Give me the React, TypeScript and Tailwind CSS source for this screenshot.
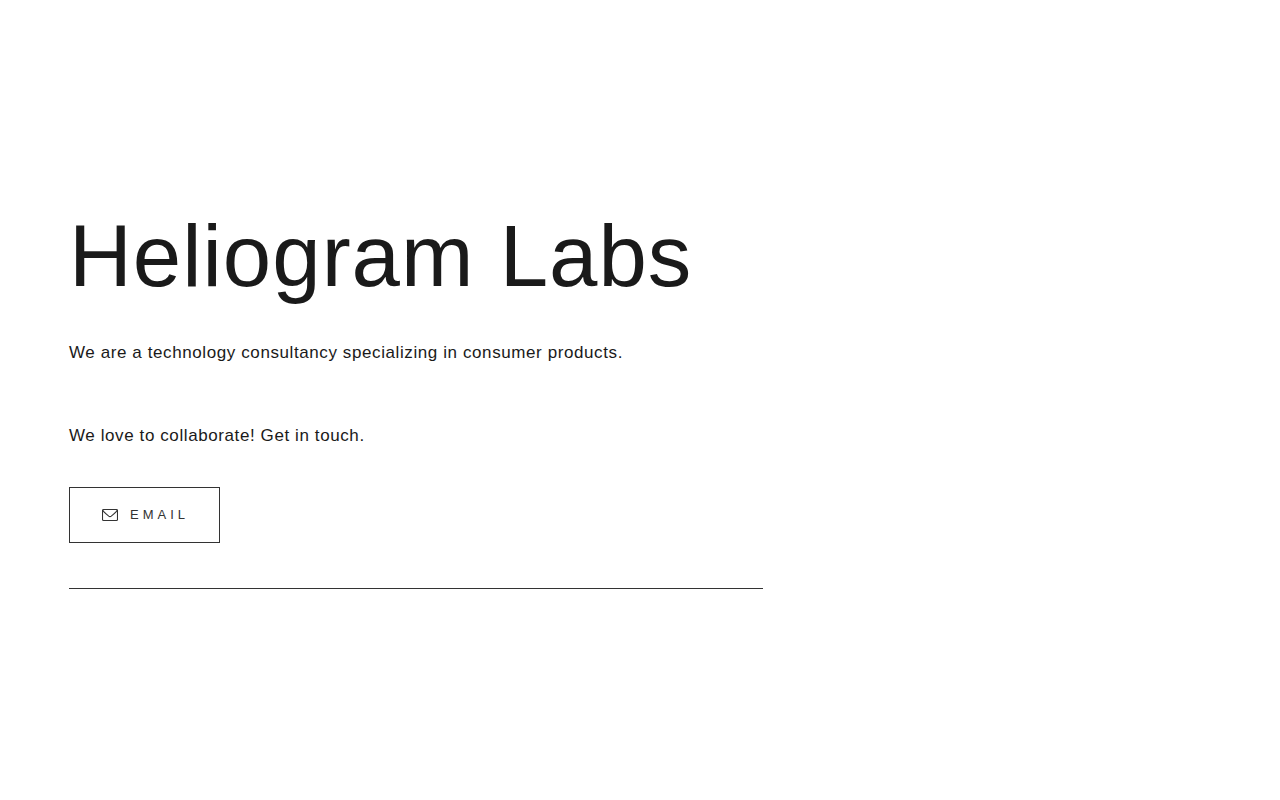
import React from 'react';

function EnvelopeIcon() {
  return (
    <svg viewBox="0 0 16 16" fill="none" stroke="currentColor" strokeLinejoin="round" className="h-4 w-4" aria-hidden="true">
      <rect x="0.5" y="2.5" width="15" height="11" rx="1" strokeWidth="1.1" />
      <path d="M.8 3.3C1.6 5.2 5.6 8.2 6.7 9.1c.9.7 1.7.7 2.6 0 1.1-.9 5.1-3.9 5.9-5.8" strokeWidth="1.1" />
    </svg>
  );
}

export default function App() {
  return (
    <main className="flex min-h-screen items-center bg-white px-[69px] font-['Liberation_Sans',Arial,sans-serif] text-[#1a1a1a]">
      <section className="w-full max-w-[694px] border-b border-[#333] pb-[45px]">
        <h1 className="text-[87px] leading-[88px] tracking-[1px]">Heliogram Labs</h1>
        <p className="mt-[39px] text-[17px] leading-7 tracking-[0.035em]">
          We are a technology consultancy specializing in consumer products.
        </p>
        <p className="mt-[55px] text-[17px] leading-7 tracking-[0.035em]">
          We love to collaborate! Get in touch.
        </p>
        <a
          href="mailto:hello@heliogramlabs.com"
          className="mt-[37px] inline-flex h-14 items-center gap-3 border border-[#333] pl-8 pr-[30px] text-[13px] tracking-[4px] text-[#333]"
        >
          <EnvelopeIcon />
          EMAIL
        </a>
      </section>
    </main>
  );
}
